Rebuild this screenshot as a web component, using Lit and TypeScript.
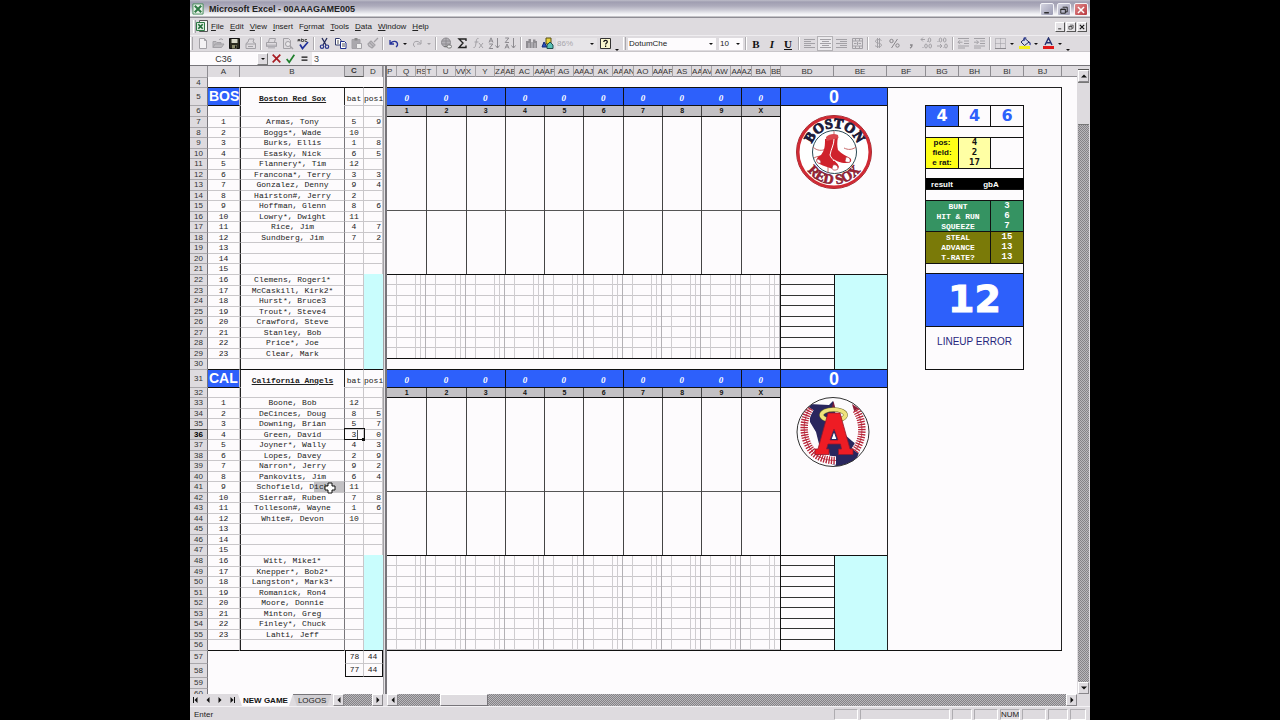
import { LitElement, html, css, svg, nothing } from "lit";
import { customElement, state } from "lit/decorators.js";
import { classMap } from "lit/directives/class-map.js";

type Row = {
  n: number;
  kind: string;
  a?: string;
  b?: string;
  c?: string;
  d?: string;
};

const RED_SOX: [string, string, string][] = [
  ["Armas, Tony", "5", "9"],
  ["Boggs*, Wade", "10", ""],
  ["Burks, Ellis", "1", "8"],
  ["Esasky, Nick", "6", "5"],
  ["Flannery*, Tim", "12", ""],
  ["Francona*, Terry", "3", "3"],
  ["Gonzalez, Denny", "9", "4"],
  ["Hairston#, Jerry", "2", ""],
  ["Hoffman, Glenn", "8", "6"],
  ["Lowry*, Dwight", "11", ""],
  ["Rice, Jim", "4", "7"],
  ["Sundberg, Jim", "7", "2"],
  ["", "", ""],
  ["", "", ""],
  ["", "", ""],
  ["Clemens, Roger1*", "", ""],
  ["McCaskill, Kirk2*", "", ""],
  ["Hurst*, Bruce3", "", ""],
  ["Trout*, Steve4", "", ""],
  ["Crawford, Steve", "", ""],
  ["Stanley, Bob", "", ""],
  ["Price*, Joe", "", ""],
  ["Clear, Mark", "", ""],
];

const ANGELS: [string, string, string][] = [
  ["Boone, Bob", "12", ""],
  ["DeCinces, Doug", "8", "5"],
  ["Downing, Brian", "5", "7"],
  ["Green, David", "3", "0"],
  ["Joyner*, Wally", "4", "3"],
  ["Lopes, Davey", "2", "9"],
  ["Narron*, Jerry", "9", "2"],
  ["Pankovits, Jim", "6", "4"],
  ["Schofield, Dick", "11", ""],
  ["Sierra#, Ruben", "7", "8"],
  ["Tolleson#, Wayne", "1", "6"],
  ["White#, Devon", "10", ""],
  ["", "", ""],
  ["", "", ""],
  ["", "", ""],
  ["Witt, Mike1*", "", ""],
  ["Knepper*, Bob2*", "", ""],
  ["Langston*, Mark3*", "", ""],
  ["Romanick, Ron4", "", ""],
  ["Moore, Donnie", "", ""],
  ["Minton, Greg", "", ""],
  ["Finley*, Chuck", "", ""],
  ["Lahti, Jeff", "", ""],
];

function teamRows(first: number, abbr: string, name: string, list: [string, string, string][]): Row[] {
  const rows: Row[] = [
    { n: first, kind: "head", a: abbr, b: name, c: "bat", d: "posi" },
    { n: first + 1, kind: "sub" },
  ];
  list.forEach(([b, c, d], i) => {
    const tall = i < 15 ? i % 2 === 0 : (i - 15) % 2 === 0;
    rows.push({
      n: first + 2 + i,
      kind: (tall ? "tall" : "low") + (i >= 15 ? " pitch" : ""),
      a: String(i + 1),
      b,
      c,
      d,
    });
  });
  rows.push({ n: first + 25, kind: "tall pitch" });
  return rows;
}

const ROWS: Row[] = [
  { n: 4, kind: "bare" },
  ...teamRows(5, "BOS", "Boston Red Sox", RED_SOX),
  ...teamRows(31, "CAL", "California Angels", ANGELS),
  { n: 57, kind: "sum first", c: "78", d: "44" },
  { n: 58, kind: "sum last", c: "77", d: "44" },
  { n: 59, kind: "bare tall" },
  { n: 60, kind: "bare tall" },
];

const INNINGS = ["1", "2", "3", "4", "5", "6", "7", "8", "9", "X"];

function columnName(i: number): string {
  return i < 26 ? String.fromCharCode(65 + i) : String.fromCharCode(64 + Math.floor(i / 26)) + String.fromCharCode(65 + (i % 26));
}

const G = "#a3a1a6";
const ICONS: Record<string, unknown> = {
  new: svg`<path d="M3.5 1.5h5l2 2v8h-7z M8.5 1.5v2h2" fill="#f4f2f4" stroke=${G}/>`,
  open: svg`<path d="M1 10.500V4.500h3l1 1h4v1.500M1 10.500l2-3.500h9l-2.500 3.500z" fill="#bdbbbf" stroke=${G}/><path d="M7 3c1-1.500 3-1.500 4 0" fill="none" stroke=${G}/>`,
  save: svg`<path d="M1.500 1.500h10v10h-10z" fill="#2b2b20" stroke="#111"/><path d="M3.500 2h6v4h-6z" fill="#d8d8c8"/><path d="M4 8h5v3.500H4z" fill="#8a8a6a"/><path d="M7 8.500h1.500v2.500H7z" fill="#111"/>`,
  mail: svg`<path d="M2 11.500v-5l2-1.500 1-3h5l-1 3 2.500 1.500v5z M2 7h9.500 M4 9.500h5" fill="none" stroke=${G}/>`,
  print: svg`<path d="M3.500 5l1-3.500h6L9.500 5M1.500 5.500h10v4h-10z" fill="none" stroke=${G}/><path d="M2 7.500h9v2H2zM3 10h7v1.500H3z" fill="#bab8bd"/>`,
  preview: svg`<path d="M2.500 1.500h5l2 2v8h-7z" fill="none" stroke=${G}/><circle cx="7" cy="7" r="2.500" fill="#e9e7ea" stroke=${G}/><path d="M9 9l3 3" stroke=${G} stroke-width="1.500"/>`,
  spell: svg`<path d="M1 4.500V2.500h2v2M1 3.500h2M4.500 1.500v3h2v-2h-2M10 2.500H8v2h2" fill="none" stroke="#444" stroke-width=".9"/><path d="M3 7.500l2.500 4L11 5" fill="none" stroke="#20309a" stroke-width="1.700"/>`,
  cut: svg`<path d="M4 1l4 7M9 1L5 8" stroke="#222a5a" stroke-width="1.300"/><circle cx="4" cy="9.700" r="1.700" fill="none" stroke="#26348a" stroke-width="1.200"/><circle cx="9" cy="9.700" r="1.700" fill="none" stroke="#26348a" stroke-width="1.200"/>`,
  copy: svg`<path d="M1.500 1.500h4l1.500 1.500v5h-5.500z" fill="#fff" stroke="#333c6c"/><path d="M6.500 4.500h4l1.500 1.500v5.500H6.500z" fill="#fff" stroke="#20308c"/><path d="M8 7h3M8 9h3M3 4h2M3 6h2" stroke="#555"/>`,
  paste: svg`<path d="M2 2.500h8v9H2z" fill="#aaa8ad" stroke=${G}/><path d="M4.500 1h3v2.500h-3z" fill="#888"/><path d="M6.500 6.500h5v5h-5z" fill="#eee" stroke=${G}/>`,
  brush: svg`<path d="M12 1L8 5M3 5l5 5M2 7l3-3 4 4-3 3-1.500-1L3 9z" fill="#c7c5c9" stroke=${G} stroke-width="1.200"/>`,
  undo: svg`<path d="M3 3v4h4M3.500 6.500C6 3 11 4 10.500 8c-.2 1-1 1.500-1.500 2" fill="none" stroke="#24329a" stroke-width="1.300"/>`,
  redo: svg`<path d="M10 3v4H6M9.500 6.500C7 3 2 4 2.500 8c.2 1 1 1.500 1.500 2" fill="none" stroke=${G}/>`,
  web: svg`<circle cx="6" cy="5.500" r="4.500" fill="#b3b1b6" stroke="#8d8b90"/><path d="M2 4h8M2 7h8M6 1v9" stroke="#88868a" stroke-width=".8"/><path d="M4 9.500h3M7 9.500a1.500 1.500 0 0 1 1.500-1.500H10a1.500 1.500 0 0 1 0 3H8.500A1.500 1.500 0 0 1 7 9.500z" fill="#eee" stroke="#777"/>`,
  sum: svg`<path d="M10 4V2H3l4 4-4 4.500h7V8.500" fill="none" stroke="#222" stroke-width="1.400"/>`,
  fx: svg`<path d="M6.500 1.500C4.500 1 4.500 3 4 6s-.7 5-2.500 4.500M2.500 5h4M7 6l4 5M11 6l-4 5" fill="none" stroke=${G}/>`,
  sorta: svg`<path d="M1 5.500L3 .8l2 4.700M1.600 4h2.800M1.200 7h3.600L1.200 11.500h3.800M9.500 1v10M7.500 8.500l2 2.500 2-2.500" fill="none" stroke="#8d8b90"/>`,
  sortz: svg`<path d="M1.200 1h3.600L1.200 5.500h3.800M1 11.500L3 7l2 4.500M1.600 10h2.800M9.500 1v10M7.500 8.500l2 2.500 2-2.500" fill="none" stroke="#8d8b90"/>`,
  chart: svg`<path d="M1 11V4h2.500V2H6v3h2V2.500h2.500V4H12v7z" fill="#8f8d92"/><path d="M4 6v5M7 5v6M10 6v5" stroke="#c9c7cc"/>`,
  draw: svg`<path d="M5 1h5v6H5z" fill="#e7d23c" stroke="#574f10"/><path d="M1 10l2-5 3 5z" fill="#2b52c4" stroke="#122a77"/><path d="M6 8l3-3 3 3v3.500H6z" fill="#5bc0b5" stroke="#1f4f4d"/>`,
  help: svg`<path d="M1.500 1.500h10v10h-10z" fill="#fbf8cf" stroke="#333"/><path d="M4.800 5c0-2.300 3.600-2.300 3.500 0C8.200 6 6.600 6 6.600 7.600M6.600 8.600v1.400" fill="none" stroke="#111" stroke-width="1.200"/>`,
  left: svg`<path d="M1 2.500h11M1 4.500h7M1 6.500h11M1 8.500h7M1 10.500h11" stroke=${G}/>`,
  center: svg`<path d="M1 2.500h11M3 4.500h7M1 6.500h11M3 8.500h7M1 10.500h11" stroke=${G}/>`,
  right: svg`<path d="M1 2.500h11M5 4.500h7M1 6.500h11M5 8.500h7M1 10.500h11" stroke=${G}/>`,
  merge: svg`<path d="M1.500 1.500h10v10h-10zM1.500 4h10M1.500 9h10M4.500 1.500V4M8.500 1.500V4M4.500 9v2.500M8.500 9v2.500M3 6.500h2.500M7.500 6.500H10M6.500 5v3" fill="none" stroke=${G}/>`,
  dollar: svg`<path d="M9.500 3.500c-1-1.300-6-1.500-6 .8s6 1.500 6 3.800-5 2-6.500.5M5.500 1v10M7.500 1v10" fill="none" stroke=${G}/>`,
  percent: svg`<circle cx="3.500" cy="4" r="1.700" fill="none" stroke="#88868a"/><circle cx="9.500" cy="8.500" r="1.700" fill="none" stroke="#88868a"/><path d="M9.500 2l-6 9" stroke="#88868a"/>`,
  comma: svg`<path d="M6 8h2c0 1.800-.6 2.700-2 3.200" fill="none" stroke="#88868a" stroke-width="1.400"/>`,
  incdec: svg`<path d="M1 2.500h4M3 .5L1 2.500l2 2" fill="none" stroke=${G}/><ellipse cx="9.500" cy="3" rx="1.300" ry="2" fill="none" stroke=${G}/><ellipse cx="6" cy="9" rx="1.300" ry="2" fill="none" stroke=${G}/><ellipse cx="10.200" cy="9" rx="1.300" ry="2" fill="none" stroke=${G}/><path d="M2.500 10.500h1M7 4.500h.8" stroke=${G}/>`,
  decdec: svg`<ellipse cx="4.500" cy="3" rx="1.300" ry="2" fill="none" stroke=${G}/><ellipse cx="8.700" cy="3" rx="1.300" ry="2" fill="none" stroke=${G}/><ellipse cx="10" cy="9" rx="1.300" ry="2" fill="none" stroke=${G}/><path d="M1 9h5M4 7l2 2-2 2M1.500 4.500h1M7.500 10.500h.8" fill="none" stroke=${G}/>`,
  outdent: svg`<path d="M1 1.500h11M7 4h5M7 6.500h5M1 9h11M1 11h7M5.500 5.200H1M3 3.200l-2 2 2 2" fill="none" stroke=${G}/>`,
  indent: svg`<path d="M1 1.500h11M7 4h5M7 6.500h5M1 9h11M1 11h7M1 5.200h4.500M3.500 3.200l2 2-2 2" fill="none" stroke=${G}/>`,
  borders: svg`<path d="M1.500 1.500h10v10h-10zM6.500 1.500v10M1.500 6.500h10" fill="none" stroke="#9b999e" stroke-dasharray="1 1"/><path d="M1 11.500h11" stroke="#8c8a8f"/>`,
  fill: svg`<path d="M3 5l4-3.500L11 5 6.500 8.500z" fill="#d9dcec" stroke="#222a5a"/><path d="M6 4V1.500c0-1 2-1 2 0M11 5c1.500 1 1.200 2.500.8 3" fill="none" stroke="#20308c" stroke-width="1.200"/><path d="M1 9h11v3H1z" fill="#f4f01c"/>`,
  color: svg`<path d="M3 8l3.500-7L10 8M4.300 5.800h4.500" fill="none" stroke="#24306e" stroke-width="1.400"/><path d="M1 9h11v3H1z" fill="#e01818"/>`,
  app: svg`<path d="M1 1h11v11H1z" fill="#e9f1ea" stroke="#3f8a54"/><path d="M3 3l7 7M10 3l-7 7" stroke="#2f7b45" stroke-width="2.200"/>`,
  book: svg`<path d="M3.500.5h8v11h-8z" fill="#f4f6f4" stroke="#555"/><path d="M.5 2.500h8v8h-8z" fill="#dcebdf" stroke="#2f7b45"/><path d="M2.300 4.300l4.400 4.400M6.700 4.300L2.300 8.700" stroke="#1f6b35" stroke-width="1.600"/>`,
  min: svg`<path d="M3.500 9.500h5" stroke="#222" stroke-width="1.500"/>`,
  max: svg`<path d="M5 3.500h5v5H8M3 5.500h5v4.500H3z M3 6h5" fill="none" stroke="#222"/>`,
  close: svg`<path d="M3.200 3.200l6.600 6.600M9.800 3.200L3.200 9.800" stroke="#fff" stroke-width="1.600"/>`,
  dclose: svg`<path d="M3 3l7 7M10 3L3 10" stroke="#111" stroke-width="1.900"/>`,
};

const icon = (name: string) => html`<svg class="ic" viewBox="0 0 13 13" aria-hidden="true">${ICONS[name]}</svg>`;
const tool = (name: string, label: string, on = false) =>
  html`<button class=${classMap({ tool: true, on })} aria-label=${label}>${icon(name)}</button>`;
const caret = (label: string, off = false) =>
  html`<button class=${classMap({ caret: true, off })} aria-label=${label}></button>`;
const sep = html`<span class="sep"></span>`;
const arrow = (dir: string, label: string) => html`<button class="arrow" aria-label=${label}>
  <svg class="tri ${dir}" viewBox="0 0 6 6" aria-hidden="true"><path d="M4.500 0v6L1.500 3z" fill="#111" /></svg>
</button>`;

@customElement("app-root")
export class AppRoot extends LitElement {
  @state() private sheet = "NEW GAME";

  static styles = css`
    :host {
      display: block;
      height: 100vh;
      background: #000;
      padding: 0 190px;
      box-sizing: border-box;
      overflow: hidden;
      font: 8px/10px "Liberation Sans", Arial, sans-serif;
      color: #222;
      --face: #dedbdf;
      --paper: #fdfbfd;
      --blue: #2d60fb;
      --line: #c9c7ca;
    }
    *,
    *::before {
      box-sizing: border-box;
    }
    button,
    input,
    select {
      font: inherit;
      color: inherit;
      border: 0;
      padding: 0;
      margin: 0;
      background: none;
      border-radius: 0;
      appearance: none;
      min-width: 0;
    }
    .window {
      height: 100%;
      display: flex;
      flex-direction: column;
      background: var(--face);
    }
    .title {
      flex: none;
      height: 18px;
      display: flex;
      align-items: center;
      gap: 3px;
      padding: 0 2px;
      background: linear-gradient(#bebdc9 0, #a09eb1 2px, #aeacbc 6px, #cdccd6 10px, #f3f3f6 14px, #f8f8fa 16px, #8f8d94 17px);
    }
    .title h1 {
      flex: 1;
      margin: 0 0 0 2px;
      font: bold 9px/14px "Liberation Sans", Arial, sans-serif;
      color: #222;
    }
    .title .ic {
      width: 12px;
      height: 12px;
    }
    .wbtn {
      width: 14px;
      height: 13px;
      border: 1px solid #f4f4f8;
      border-radius: 2px;
      background: linear-gradient(135deg, #d4d4e0, #9a9ab2);
      display: grid;
      place-items: center;
    }
    .wbtn.x {
      background: linear-gradient(135deg, #e08a8c, #b8383e);
    }
    .menu {
      flex: none;
      height: 17px;
      display: flex;
      align-items: center;
      gap: 6px;
      padding: 0 3px;
    }
    .menu .grip {
      margin-right: -6px;
    }
    .menu > .ic {
      margin-right: -4px;
    }
    .menu u {
      text-decoration-thickness: 1px;
    }
    .mdi {
      margin-left: auto;
      display: flex;
      gap: 1px;
    }
    .mdi button {
      width: 10px;
      height: 10px;
      display: grid;
      place-items: center;
      background: #e6e4e7;
      border: 1px solid;
      border-color: #fff #555 #555 #fff;
    }
    .mdi .ic {
      width: 8px;
      height: 8px;
    }
    .ic {
      width: 13px;
      height: 13px;
      display: block;
      flex: none;
    }
    .grip {
      width: 3px;
      height: 13px;
      border-left: 1px solid #fff;
      border-right: 1px solid #aaa8ac;
    }
    .tools {
      flex: none;
      height: 17px;
      display: flex;
      align-items: center;
      border-top: 1px solid #efedf0;
      border-bottom: 1px solid #c9c6ca;
    }
    .tools .grip {
      margin: 0 1px 0 0;
    }
    .tools .bar2 {
      margin: 0 2px;
    }
    .tool {
      width: 16px;
      height: 15px;
      display: grid;
      place-items: center;
      font: bold 11px/14px "Liberation Serif", serif;
      color: #111;
    }
    .tool.on {
      background: #ebe9ec;
      border: 1px solid #b4b2b6;
    }
    .caret {
      width: 8px;
      height: 15px;
      display: grid;
      place-items: center;
    }
    .caret::before,
    .pick::after {
      content: "";
      border: 2px solid transparent;
      border-top-color: #111;
      border-bottom: 0;
    }
    .caret.off::before {
      border-top-color: #a3a1a6;
    }
    .caret.low {
      align-items: end;
    }
    .sep {
      width: 5px;
      height: 13px;
      display: grid;
      justify-content: center;
    }
    .sep::before {
      content: "";
      border-left: 1px solid #aeacb0;
      border-right: 1px solid #fff;
    }
    .pick {
      display: flex;
      align-items: center;
      height: 12px;
      background: var(--paper);
      padding-right: 3px;
    }
    .pick select {
      flex: 1;
      height: 12px;
      padding-left: 1px;
    }
    .pick.zoom {
      width: 41px;
      margin-left: 1px;
      background: #e7e5e8;
      color: #a9a7ac;
    }
    .pick.font {
      width: 88px;
    }
    .pick.size {
      width: 24px;
      margin-left: 3px;
    }
    .formula {
      flex: none;
      height: 13px;
      display: flex;
      align-items: center;
      background: var(--paper);
      font-size: 9px;
    }
    .formula .name {
      width: 67px;
      height: 12px;
      text-align: center;
      color: #333;
    }
    .formula .drop {
      width: 11px;
      height: 12px;
      background: var(--face);
      border: 1px solid;
      border-color: #fff #777 #777 #fff;
    }
    .formula .acts {
      display: flex;
      align-items: center;
      height: 13px;
      gap: 3px;
      padding: 0 2px 0 3px;
      background: #e9e7ea;
    }
    .formula .acts .ic {
      width: 11px;
      height: 11px;
    }
    .formula .value {
      flex: 1;
      height: 12px;
      padding-left: 2px;
      color: #444;
    }
    .main {
      flex: 1;
      min-height: 0;
      display: grid;
      grid-template-columns: 193px 4px minmax(0, 1fr) 13px;
      grid-template-rows: minmax(0, 1fr) 12px;
      border-top: 1px solid #77757a;
    }
    .pane {
      overflow: hidden;
      background: var(--paper);
    }
    .split {
      background: #e4e2e5;
      border-left: 1px solid #a4a2a6;
      border-right: 2px solid #77757a;
    }
    table.roster {
      width: 193px;
      table-layout: fixed;
      border-collapse: separate;
      border-spacing: 0;
      font: 8px/8px "Liberation Mono", "Courier New", monospace;
      color: #222;
    }
    .roster td,
    .roster th {
      padding: 0;
      overflow: hidden;
      white-space: nowrap;
      text-align: center;
      font-weight: normal;
    }
    .roster th {
      background: var(--face);
      font-family: "Liberation Sans", Arial, sans-serif;
      color: #333;
    }
    .roster thead th {
      height: 11px;
      border-right: 1px solid #8f8d92;
    }
    .roster thead .cur {
      background: #cfcdd1;
      border-bottom: 1px solid #555;
      font-weight: bold;
    }
    .roster tbody th {
      border-top: 1px solid #a9a7ab;
      border-right: 1px solid #77757a;
    }
    .roster .active th {
      font-weight: bold;
      color: #000;
      background: #cfcdd1;
      border-color: #555;
    }
    .roster td {
      border-top: 1px solid var(--line);
      border-right: 1px solid var(--line);
    }
    .roster .colb {
      border-left: 1px solid #222;
      border-right-color: #77757a;
    }
    .roster td.cold {
      text-align: right;
      padding-right: 1px;
    }
    tr.bare {
      height: 10px;
    }
    .roster tr.bare td {
      border-color: var(--paper);
    }
    tr.head {
      height: 18px;
    }
    .roster tr.head td {
      border-top-color: #111;
      vertical-align: bottom;
      padding-bottom: 2px;
    }
    .roster tr.head td.cola {
      background: var(--blue);
      color: #fff;
      font: bold 14px/15px "Liberation Sans", Arial, sans-serif;
      text-align: left;
      padding: 0 0 1px 1px;
    }
    .roster tr.head td.colb {
      font-weight: bold;
      text-decoration: underline;
      border-right-color: #222;
    }
    .roster tr.head td.cold {
      text-align: left;
      padding: 0 0 2px;
      border-right: 0;
    }
    tr.sub {
      height: 11px;
    }
    tr.sub.second {
      height: 10px;
    }
    .roster tr.sub td.cola {
      border-top-color: #111;
    }
    .roster tr.sub td.colb {
      border-top-color: var(--paper);
    }
    tr.tall {
      height: 11px;
    }
    tr.low {
      height: 10px;
    }
    .roster tr.pitch td.cold {
      background: #c9fdfd;
      border-color: #c9fdfd;
    }
    .roster tr.sum td {
      border-color: var(--paper);
    }
    .roster tr.sum.first td {
      border-top-color: #111;
    }
    tr.sum {
      height: 14px;
    }
    tr.sum.first {
      height: 13px;
    }
    .roster tr.sum td.colc,
    .roster tr.sum td.cold {
      text-align: center;
      border-right-color: #111;
      border-top-color: var(--line);
    }
    .roster tr.sum td.colc {
      border-left: 1px solid #111;
      border-right-color: var(--line);
    }
    .roster tr.sum.first td.colc,
    .roster tr.sum.first td.cold {
      border-top-color: #111;
    }
    .roster tr.sum.last td.colc,
    .roster tr.sum.last td.cold {
      border-bottom: 1px solid #111;
    }
    .roster .hover {
      background: linear-gradient(to left, #c3c1c4 30px, transparent 30px);
      overflow: visible;
      position: relative;
    }
    .pointer {
      position: absolute;
      right: 8px;
      top: 0;
      width: 12px;
      height: 12px;
      z-index: 2;
    }
    .roster .editing {
      outline: 1px solid #111;
      position: relative;
      overflow: visible;
      background: linear-gradient(#555, #555) 12px 0 / 1px 100% no-repeat;
    }
    .handle {
      position: absolute;
      right: -2px;
      bottom: -2px;
      width: 3px;
      height: 3px;
      background: #111;
    }
    .heads {
      height: 11px;
      display: grid;
      grid-template-columns: 394fr 53fr 53fr 39fr 33fr 32fr 33fr 38fr 15fr;
      background: var(--face);
      border-bottom: 1px solid #8f8d92;
      line-height: 11px;
      color: #333;
      text-align: center;
    }
    .heads > span {
      border-right: 1px solid #8f8d92;
    }
    .quads,
    .mesh {
      display: grid;
      grid-template-columns: repeat(10, 10fr 19fr 5fr 5fr);
    }
    .quads i {
      font-style: normal;
      overflow: hidden;
      min-width: 0;
      white-space: nowrap;
      border-right: 1px solid #a4a2a6;
      text-align: left;
    }
    .quads i:nth-child(4n + 3) {
      border-right: 0;
    }
    .quads i:nth-child(4n + 2) {
      text-align: center;
    }
    .sheet {
      margin-top: 10px;
      display: grid;
      grid-template-columns: 500fr 175fr 15fr;
    }
    .team {
      display: grid;
      grid-template-columns: 394fr 53fr 53fr;
      grid-template-rows: 18px 11px 158px 95px;
    }
    .team.second {
      grid-template-rows: 18px 10px 158px 95px;
    }
    .team > * {
      border-top: 1px solid #111;
    }
    .ten {
      display: grid;
      grid-template-columns: repeat(10, minmax(0, 1fr));
      border-right: 1px solid #111;
      text-align: center;
    }
    .runs {
      background: var(--blue);
      color: #fff;
      font: italic bold 9px/21px "Liberation Serif", serif;
    }
    .runs span:nth-child(3n + 4) {
      border-left: 1px solid #111;
    }
    .inn {
      background: #c3c1c4;
      font-weight: bold;
      font-size: 7px;
      line-height: 10px;
      color: #111;
    }
    .inn span + span,
    .boxes span + span {
      border-left: 1px solid #444;
    }
    .boxes span {
      background: linear-gradient(#555, #555) 0 93px / 100% 1px no-repeat;
    }
    .total {
      grid-column: 2 / 4;
      background: var(--blue);
      color: #fff;
      font: bold 18px/18px "Liberation Sans", Arial, sans-serif;
      text-align: center;
    }
    .logo {
      grid-column: 2 / 4;
      grid-row: 2 / 4;
      padding-top: 8px;
      display: flex;
      justify-content: center;
      align-items: start;
    }
    .logo svg {
      width: 78px;
      height: 76px;
      display: block;
    }
    .mesh {
      grid-row: 4;
      border-right: 1px solid #111;
      background: repeating-linear-gradient(transparent 0 9px, var(--line) 9px 10px, transparent 10px 20px, var(--line) 20px 21px);
    }
    .mesh i {
      border-right: 1px solid #cfcdd0;
    }
    .mesh i:nth-child(4n) {
      border-color: #b3b1b5;
    }
    .mesh i:last-child {
      border: 0;
    }
    .mesh.short {
      grid-template-rows: 83px 1fr;
    }
    .mesh .rest {
      grid-column: 1 / -1;
      border-top: 1px solid #111;
      background: var(--paper);
    }
    .lined {
      grid-row: 4;
      background: repeating-linear-gradient(transparent 0 9px, #333 9px 10px, transparent 10px 20px, #333 20px 21px) 0 0 / 100% 90px no-repeat;
    }
    .cyan {
      grid-row: 4;
      background: #c9fdfd;
      border-left: 1px solid #111;
    }
    .ground {
      border: 1px solid #222;
      border-bottom: 0;
      padding: 17px 0 0;
      display: grid;
      grid-template-columns: 38fr 98fr 38fr;
      align-items: start;
    }
    .closing {
      grid-column: 1 / 3;
      border-top: 1px solid #111;
    }
    table.panel {
      grid-column: 2;
      width: 100%;
      table-layout: fixed;
      border-collapse: separate;
      border-spacing: 0;
      border-left: 1px solid #111;
      border-bottom: 1px solid #111;
      font: bold 8px/9px "Liberation Sans", Arial, sans-serif;
      text-align: center;
      color: #111;
    }
    .panel td,
    .panel th {
      padding: 0;
      border-right: 1px solid #111;
      font-weight: bold;
      text-align: center;
      white-space: nowrap;
    }
    .panel .top > * {
      border-top: 1px solid #111;
    }
    .panel .big {
      height: 21px;
      font: bold 16px/18px "DejaVu Sans", sans-serif;
      color: var(--blue);
    }
    .panel .big.blue {
      background: var(--blue);
      color: #fff;
    }
    .panel .r10 {
      height: 10px;
    }
    .panel .r11 {
      height: 11px;
    }
    .panel .yellow {
      background: #ffff18;
    }
    .panel .pale {
      background: #ffffa4;
      font: bold 9px/9px "DejaVu Sans Mono", monospace;
    }
    .panel .black > * {
      background: #000;
      color: #fff;
      border-color: #000;
    }
    .panel .green > *,
    .panel .olive > * {
      background: #359362;
      color: #fff;
      font: bold 8px/9px "Liberation Mono", monospace;
    }
    .panel .olive > * {
      background: #7a7a08;
    }
    .panel .green td,
    .panel .olive td {
      font-size: 9px;
    }
    .panel .twelve {
      height: 53px;
      background: var(--blue);
      color: #fff;
      font: bold 38px/50px "DejaVu Sans", sans-serif;
      -webkit-text-stroke: 1px #fff;
      vertical-align: top;
    }
    .panel .error {
      height: 43px;
      font: 10px/12px "Liberation Sans", Arial, sans-serif;
      color: #26267c;
      vertical-align: top;
      padding-top: 9px;
    }
    .hatch {
      background: repeating-conic-gradient(#858387 0 25%, #b9b7bb 0 50%) 0 0 / 2px 2px;
    }
    .vbar {
      display: flex;
      flex-direction: column;
      padding: 0 1px;
      background: var(--face);
    }
    .vbar .nub {
      height: 4px;
      border-bottom: 1px solid #555;
    }
    .vbar .thumb {
      height: 43px;
      border-bottom: 1px solid #777;
      border-top: 1px solid #777;
    }
    .vbar .hatch {
      flex: 1;
    }
    .arrow {
      flex: none;
      width: 11px;
      height: 12px;
      background: var(--face);
      border: 1px solid;
      border-color: #fff #88868a #88868a #fff;
      display: grid;
      place-items: center;
    }
    .tri {
      width: 6px;
      height: 6px;
    }
    .tri.right {
      transform: rotate(180deg);
    }
    .tri.up {
      transform: rotate(90deg);
    }
    .tri.down {
      transform: rotate(-90deg);
    }
    .tabs {
      display: flex;
      align-items: stretch;
      background: var(--face);
    }
    .tabs .nav {
      width: 12px;
      border: 0;
    }
    .navbar {
      display: flex;
      width: 48px;
    }
    .tab {
      padding: 0 5px;
      height: 12px;
      line-height: 11px;
      border-top: 1px solid #77757a;
      clip-path: polygon(0 0, 100% 0, calc(100% - 4px) 100%, 4px 100%);
      background: #d0ced2;
    }
    .tab.sel {
      font-weight: bold;
      color: #111;
      background: var(--paper);
      border-top-color: var(--paper);
    }
    .tabs .track {
      flex: 1;
    }
    .hbar {
      grid-column: 2 / 4;
      display: flex;
      background: var(--face);
      padding-left: 4px;
    }
    .hbar .h1 {
      flex: 42;
    }
    .hbar .thumb {
      flex: 46;
      border: 1px solid;
      border-color: #fff #77757a #77757a #fff;
    }
    .hbar .h2 {
      flex: 580;
    }
    .status {
      flex: none;
      height: 14px;
      display: flex;
      align-items: center;
      gap: 2px;
      padding: 2px 4px 0;
      border-top: 1px solid #f3f1f4;
      line-height: 11px;
    }
    .status .msg {
      flex: 1;
    }
    .status .box {
      height: 11px;
      border: 1px solid;
      border-color: #aeacb0 #fff #fff #aeacb0;
      text-align: center;
      line-height: 10px;
    }
    .w16 {
      width: 16px;
    }
    .w20 {
      width: 20px;
    }
    .w24 {
      width: 24px;
    }
    .w28 {
      width: 28px;
    }
    .w90 {
      width: 90px;
    }
  `;

  private renderTitle() {
    return html`<header class="title">
      ${icon("app")}
      <h1>Microsoft Excel - 00AAAGAME005</h1>
      <button class="wbtn" aria-label="Minimize">${icon("min")}</button>
      <button class="wbtn" aria-label="Restore">${icon("max")}</button>
      <button class="wbtn x" aria-label="Close">${icon("close")}</button>
    </header>`;
  }

  private renderMenu() {
    const items: [string, string, string][] = [
      ["", "F", "ile"],
      ["", "E", "dit"],
      ["", "V", "iew"],
      ["", "I", "nsert"],
      ["F", "o", "rmat"],
      ["", "T", "ools"],
      ["", "D", "ata"],
      ["", "W", "indow"],
      ["", "H", "elp"],
    ];
    return html`<nav class="menu">
      <span class="grip"></span>${icon("book")}
      ${items.map(([pre, key, post]) => html`<button>${pre}<u>${key}</u>${post}</button>`)}
      <span class="mdi">
        <button aria-label="Minimize workbook">${icon("min")}</button>
        <button aria-label="Restore workbook">${icon("max")}</button>
        <button aria-label="Close workbook">${icon("dclose")}</button>
      </span>
    </nav>`;
  }

  private renderTools() {
    return html`<div class="tools">
      <span class="grip"></span>
      ${tool("new", "New")}${tool("open", "Open")}${tool("save", "Save")}${tool("mail", "Mail")}${sep}
      ${tool("print", "Print")}${tool("preview", "Preview")}${tool("spell", "Spelling")}${sep}
      ${tool("cut", "Cut")}${tool("copy", "Copy")}${tool("paste", "Paste")}${tool("brush", "Format painter")}${sep}
      ${tool("undo", "Undo")}${caret("Undo list")}${tool("redo", "Redo")}${caret("Redo list", true)}${sep}
      ${tool("web", "Hyperlink")}${tool("sum", "AutoSum")}${tool("fx", "Function")}${tool("sorta", "Sort ascending")}${tool("sortz", "Sort descending")}${sep}
      ${tool("chart", "Chart")}${tool("draw", "Drawing")}
      <span class="pick zoom"><select aria-label="Zoom"><option>86%</option></select></span>
      ${tool("help", "Help")}<button class="caret low" aria-label="More"></button>
      <span class="grip bar2"></span>
      <span class="pick font"><select aria-label="Font"><option>DotumChe</option></select></span>
      <span class="pick size"><select aria-label="Font size"><option>10</option></select></span>
      ${sep}
      <button class="tool">B</button><button class="tool"><i>I</i></button><button class="tool"><u>U</u></button>${sep}
      ${tool("left", "Align left")}${tool("center", "Center", true)}${tool("right", "Align right")}${tool("merge", "Merge")}${sep}
      ${tool("dollar", "Currency")}${tool("percent", "Percent")}${tool("comma", "Comma")}${tool("incdec", "More decimals")}${tool("decdec", "Fewer decimals")}${sep}
      ${tool("outdent", "Decrease indent")}${tool("indent", "Increase indent")}${sep}
      ${tool("borders", "Borders")}${caret("Border styles")}${tool("fill", "Fill color")}${caret("Fill colors")}${tool("color", "Font color")}${caret("Font colors")}
      <button class="caret low" aria-label="More formatting"></button>
    </div>`;
  }

  private renderFormula() {
    return html`<div class="formula">
      <input class="name" aria-label="Name box" .value=${"C36"} />
      <button class="caret drop" aria-label="Names"></button>
      <span class="acts">
        <button aria-label="Cancel"><svg class="ic" viewBox="0 0 13 13"><path d="M2 2l9 9M11 2L2 11" stroke="#a81c22" stroke-width="2" /></svg></button>
        <button aria-label="Enter"><svg class="ic" viewBox="0 0 13 13"><path d="M2 7l3 4L11 2" fill="none" stroke="#1f7f2c" stroke-width="2" /></svg></button>
        <button aria-label="Edit formula"><svg class="ic" viewBox="0 0 13 13"><path d="M3 5h7M3 8.500h7" stroke="#111" stroke-width="1.500" /></svg></button>
      </span>
      <input class="value" aria-label="Formula" .value=${"3"} />
    </div>`;
  }

  private renderRow(r: Row) {
    const kind = r.n === 32 ? "sub second" : r.n === 36 ? r.kind + " active" : r.kind;
    return html`<tr class=${kind}>
      <th scope="row">${r.n}</th>
      <td class="cola">${r.a ?? nothing}</td>
      <td class=${classMap({ colb: !r.kind.startsWith("sum"), hover: r.n === 41 })}>${r.b ?? nothing}${r.n === 41
          ? html`<svg class="pointer" viewBox="0 0 12 12" aria-hidden="true">
              <path d="M4 1h4v3h3v4H8v3H4V8H1V4h3z" fill="#fff" stroke="#111" />
            </svg>`
          : nothing}</td>
      <td class=${classMap({ colc: true, editing: r.n === 36 })}>${r.c ?? nothing}${r.n === 36 ? html`<span class="handle"></span>` : nothing}</td>
      <td class="cold">${r.d ?? nothing}</td>
    </tr>`;
  }

  private renderRoster() {
    return html`<table class="roster">
      <colgroup>
        <col width="18" />
        <col width="32" />
        <col width="105" />
        <col width="19" />
        <col width="19" />
      </colgroup>
      <thead>
        <tr>
          <th></th>
          <th scope="col">A</th>
          <th scope="col">B</th>
          <th scope="col" class="cur">C</th>
          <th scope="col">D</th>
        </tr>
      </thead>
      <tbody>
        ${ROWS.map((r) => this.renderRow(r))}
      </tbody>
    </table>`;
  }

  private renderTeam(second: boolean, logo: unknown) {
    return html`<section class=${classMap({ team: true, second })}>
      <div class="ten runs">${INNINGS.map(() => html`<span>0</span>`)}</div>
      <div class="total">0</div>
      <div class="ten inn">${INNINGS.map((i) => html`<span>${i}</span>`)}</div>
      <div class="logo">${logo}</div>
      <div class="ten boxes">${INNINGS.map(() => html`<span></span>`)}</div>
      <div class=${classMap({ mesh: true, short: !second })}>
        ${Array.from({ length: 40 }, () => html`<i></i>`)}${second ? nothing : html`<span class="rest"></span>`}
      </div>
      <div class="lined"></div>
      <div class="cyan"></div>
    </section>`;
  }

  private redSoxLogo() {
    return html`<svg viewBox="0 0 78 76" role="img" aria-label="Boston Red Sox">
      <defs>
        <path id="arcTop" d="M15.500 38a24 24 0 0 1 48 0" />
        <path id="arcLow" d="M6.500 38a32.500 32 0 0 0 65 0" />
      </defs>
      <ellipse cx="39" cy="38" rx="37.500" ry="36.500" fill="#fff" stroke="#8c2a30" />
      <ellipse cx="39" cy="38" rx="36" ry="35" fill="#fff" stroke="#cf2a34" stroke-width="3" />
      <ellipse cx="39.500" cy="38" rx="22" ry="21.500" fill="#fff" stroke="#2a4a55" />
      <path d="M18 33c4 4 9 4 13 2M61 33c-4 3-8 3-12 1M19 44c3-2 6-2 9-1M39 17v5M33 59v-8" fill="none" stroke="#c05a5a" stroke-width=".9" />
      <path d="M30 25l13-2c-1 5-1 9 0 13 4 4 8 6 12 8 3 3 0 5-4 5-6 0-9-2-13-4 2 3 5 4 6 8-2 3-6 2-9 1-5-2-10-3-13-6-1-3 1-6 4-7 4-5 4-10 4-16z" fill="#cf222c" />
      <path d="M31 23c3-3 8-4 12-2l.5 3-12 3z" fill="#d9484e" />
      <path d="M39 25c0 6-3 10-4 16 1 3 3 4 4 6" fill="none" stroke="#fff" />
      <path d="M22 45c2 0 4 1 4 4-3 1-5-1-4-4zM38 51c3-1 5 1 5 4-3 2-6 1-6-1zM51 43c3 0 5 2 4 5-2 1-5 0-5-1z" fill="#fff" stroke="#b03038" stroke-width=".7" />
      <text font-family="Liberation Serif, serif" font-weight="bold" font-size="14" fill="#1c1a38" stroke="#1c1a38" stroke-width=".9" text-anchor="middle">
        <textPath href="#arcTop" startOffset="50%">BOSTON</textPath>
      </text>
      <text font-family="Liberation Serif, serif" font-weight="bold" font-size="14" fill="#a3222e" stroke="#7c2038" stroke-width=".6" text-anchor="middle">
        <textPath href="#arcLow" startOffset="50%">RED SOX</textPath>
      </text>
    </svg>`;
  }

  private angelsLogo() {
    return html`<svg viewBox="0 0 78 76" role="img" aria-label="California Angels">
      <defs><clipPath id="ball"><ellipse cx="38" cy="36" rx="36" ry="34.500" /></clipPath></defs>
      <ellipse cx="38" cy="36" rx="36" ry="34.500" fill="#fdfbfd" />
      <g clip-path="url(#ball)">
        <path d="M14 8l20 1 4-4 2 8 1 20 8 5 8 7 9 7-5 12-14 8-11-4-2-12-10-8-3-12-6-10z" fill="#29265e" />
        <path d="M57 8l9 6 4 10-5 2-5-8z" fill="#8e1c36" />
        <path d="M15 12C6 26 8 44 17 55c6 7 14 9.500 24 9.500M61 14c8 12 8 29-1 41" fill="none" stroke="#fff" stroke-width="8.500" />
        <path d="M15 12C6 26 8 44 17 55c6 7 14 9.500 24 9.500M61 14c8 12 8 29-1 41" fill="none" stroke="#b82438" stroke-width="7.500" stroke-dasharray="1.300 1.200" />
        <path d="M15 12C6 26 8 44 17 55c6 7 14 9.500 24 9.500M61 14c8 12 8 29-1 41" fill="none" stroke="#b82438" stroke-width=".8" />
      </g>
      <ellipse cx="38" cy="36" rx="36" ry="34.500" fill="none" stroke="#333" />
      <path d="M38.500 5l2 8h-4z" fill="#7a1c3c" />
      <ellipse cx="38.500" cy="19" rx="12" ry="5.500" fill="none" stroke="#6f6a2c" stroke-width="4.600" />
      <ellipse cx="38.500" cy="19" rx="12" ry="5.500" fill="none" stroke="#efe27c" stroke-width="3.600" />
      <path d="M33 17h12l10 36h3v5.500H43.500V53h3l-1-5H33l-1.500 5H34v5.500H20V53h3zM39 33l-4 11h8z" fill="#ee1c24" fill-rule="evenodd" stroke="#96182a" stroke-width=".8" />
      <path d="M39 35l-3 8.500h6z" fill="#fff" stroke="#29265e" />
    </svg>`;
  }

  private renderPanel() {
    return html`<table class="panel">
      <colgroup>
        <col width="33" />
        <col width="32" />
        <col width="33" />
      </colgroup>
      <tbody>
        <tr class="top"><td class="big blue">4</td><td class="big">4</td><td class="big">6</td></tr>
        <tr class="top"><td class="r11" colspan="3"></td></tr>
        <tr class="top"><th scope="row" class="yellow r10">pos:</th><td class="pale">4</td><td rowspan="3"></td></tr>
        <tr><th scope="row" class="yellow r10">field:</th><td class="pale">2</td></tr>
        <tr><th scope="row" class="yellow r11">e rat:</th><td class="pale">17</td></tr>
        <tr class="top"><td class="r10" colspan="3"></td></tr>
        <tr class="top black"><th scope="row" class="r11">result</th><td colspan="2">gbA</td></tr>
        <tr class="top"><td class="r11" colspan="3"></td></tr>
        <tr class="top green"><th scope="row" colspan="2" class="r11">BUNT</th><td>3</td></tr>
        <tr class="green"><th scope="row" colspan="2" class="r10">HIT &amp; RUN</th><td>6</td></tr>
        <tr class="green"><th scope="row" colspan="2" class="r10">SQUEEZE</th><td>7</td></tr>
        <tr class="top olive"><th scope="row" colspan="2" class="r11">STEAL</th><td>15</td></tr>
        <tr class="olive"><th scope="row" colspan="2" class="r10">ADVANCE</th><td>13</td></tr>
        <tr class="olive"><th scope="row" colspan="2" class="r11">T-RATE?</th><td>13</td></tr>
        <tr class="top"><td class="r10" colspan="3"></td></tr>
        <tr class="top"><td class="twelve" colspan="3">12</td></tr>
        <tr class="top"><td class="error" colspan="3">LINEUP ERROR</td></tr>
      </tbody>
    </table>`;
  }

  private renderTabs() {
    return html`<div class="tabs">
      <span class="navbar">
        ${["left", "left", "right", "right"].map(
          (d, i) => html`<button class="arrow nav" aria-label=${["First", "Previous", "Next", "Last"][i] + " sheet"}>
            <svg class="tri ${d}" viewBox="0 0 6 6">
              <path d="M4.500 0v6L1.500 3z" fill="#111" />
              ${i === 0 || i === 3 ? svg`<path d="M.5 0v6" stroke="#111" />` : nothing}
            </svg>
          </button>`
        )}
      </span>
      ${["NEW GAME", "LOGOS"].map(
        (t) => html`<button class=${classMap({ tab: true, sel: t === this.sheet })} @click=${() => (this.sheet = t)}>${t}</button>`
      )}
      <span class="track"></span>
      ${arrow("left", "Scroll left")}<span class="hatch w28"></span>${arrow("right", "Scroll right")}
    </div>`;
  }

  render() {
    return html`<div class="window">
      ${this.renderTitle()} ${this.renderMenu()} ${this.renderTools()} ${this.renderFormula()}
      <main class="main">
        <div class="pane">${this.renderRoster()}</div>
        <div class="split"></div>
        <div class="pane">
          <div class="heads">
            <div class="quads">${Array.from({ length: 40 }, (_, i) => html`<i>${columnName(15 + i)}</i>`)}</div>
            ${["BD", "BE", "BF", "BG", "BH", "BI", "BJ"].map((c) => html`<span>${c}</span>`)}
          </div>
          <div class="sheet">
            <div>${this.renderTeam(false, this.redSoxLogo())}${this.renderTeam(true, this.angelsLogo())}</div>
            <div class="ground">${this.renderPanel()}</div>
            <div></div>
            <div class="closing"></div>
          </div>
        </div>
        <div class="vbar">
          <span class="nub"></span>${arrow("up", "Scroll up")}<span class="thumb"></span><span class="hatch"></span>${arrow("down", "Scroll down")}
        </div>
        ${this.renderTabs()}
        <div class="hbar">
          ${arrow("left", "Scroll left")}<span class="hatch h1"></span><span class="thumb"></span><span class="hatch h2"></span>${arrow("right", "Scroll right")}
        </div>
      </main>
      <footer class="status">
        <span class="msg">Enter</span>
        <span class="box w24"></span><span class="box w90"></span><span class="box w20"></span><span class="box w24"></span>
        <span class="box w20">NUM</span><span class="box w24"></span><span class="box w20"></span><span class="box w16"></span>
      </footer>
    </div>`;
  }
}
